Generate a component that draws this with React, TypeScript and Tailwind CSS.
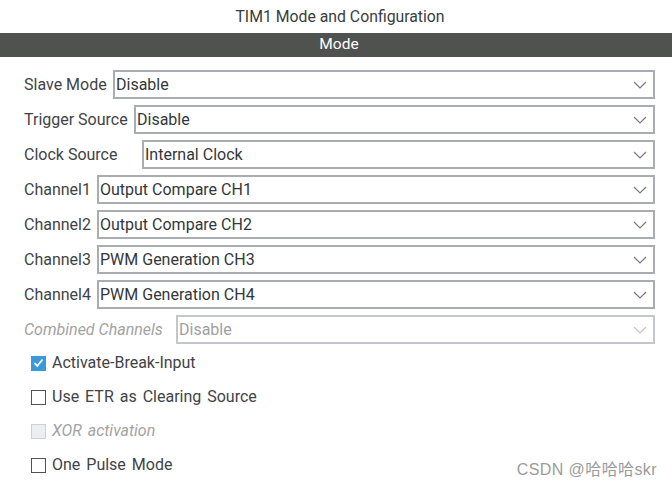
import React from 'react';

const Chevron = ({ disabled }: { disabled?: boolean }) => (
  <svg width="14" height="8" viewBox="0 0 14 8" className="shrink-0">
    <path d="M1 1 L7 7 L13 1" fill="none" stroke={disabled ? '#c4c4c4' : '#7a7a7a'} strokeWidth="1.2" />
  </svg>
);

const SelectRow = ({
  label,
  value,
  labelWidth,
  disabled,
}: {
  label: string;
  value: string;
  labelWidth: string;
  disabled?: boolean;
}) => (
  <div className="flex items-center h-[29px]">
    <div
      className={`${labelWidth} shrink-0 whitespace-nowrap ${disabled ? 'italic text-[#a3a3a3]' : 'text-[#3f4347]'}`}
    >
      {label}
    </div>
    <div
      className={`flex-1 h-full flex items-center justify-between pl-[1px] pr-[6px] border-2 ${
        disabled ? 'border-[#c3c6ca] text-[#a0a0a0]' : 'border-[#a9adb2] text-[#33373b]'
      }`}
    >
      <span>{value}</span>
      <Chevron disabled={disabled} />
    </div>
  </div>
);

const Check = ({ label, checked, disabled }: { label: string; checked?: boolean; disabled?: boolean }) => (
  <div className="flex items-center h-[34px] gap-[6px]">
    {checked ? (
      <div className="w-[15px] h-[15px] bg-[#3a9ad9] flex items-center justify-center">
        <svg width="11" height="10" viewBox="0 0 11 10">
          <path d="M1.5 5.2 L4.3 8 L9.5 1.5" fill="none" stroke="#ffffff" strokeWidth="1.8" />
        </svg>
      </div>
    ) : (
      <div
        className={`w-[15px] h-[15px] border-[1.5px] ${
          disabled ? 'border-[#cdd0d4] bg-[#eceef1]' : 'border-[#505356] bg-white'
        }`}
      />
    )}
    <span className={`[word-spacing:2px] ${disabled ? 'italic text-[#a3a3a3]' : 'text-[#3f4347]'}`}>{label}</span>
  </div>
);

export default function App() {
  return (
    <div className="relative w-[672px] h-[491px] bg-white overflow-hidden font-['Roboto',sans-serif] text-[16px]">
      {/* Title */}
      <div className="h-[33px] pl-[8px] flex items-center justify-center text-[15.8px] text-[#3a3d40]">
        TIM1 Mode and Configuration
      </div>

      {/* Section bar */}
      <div className="h-[24px] pl-[6px] bg-[#505250] flex items-center justify-center text-[15.5px] text-white">
        Mode
      </div>

      {/* Form */}
      <div className="pl-[24px] pr-[17px] pt-[13px]">
        <div className="flex flex-col gap-[6px]">
          <SelectRow label="Slave Mode" value="Disable" labelWidth="w-[89px]" />
          <SelectRow label="Trigger Source" value="Disable" labelWidth="w-[110px]" />
          <SelectRow label="Clock Source" value="Internal Clock" labelWidth="w-[118px]" />
          <SelectRow label="Channel1" value="Output Compare CH1" labelWidth="w-[73px]" />
          <SelectRow label="Channel2" value="Output Compare CH2" labelWidth="w-[73px]" />
          <SelectRow label="Channel3" value="PWM Generation CH3" labelWidth="w-[73px]" />
          <SelectRow label="Channel4" value="PWM Generation CH4" labelWidth="w-[73px]" />
          <SelectRow label="Combined Channels" value="Disable" labelWidth="w-[152px]" disabled />
        </div>

        <div className="mt-[2px] pl-[7px]">
          <Check label="Activate-Break-Input" checked />
          <Check label="Use ETR as Clearing Source" />
          <Check label="XOR activation" disabled />
          <Check label="One Pulse Mode" />
        </div>
      </div>

      {/* Watermark */}
      <div className="absolute right-[15px] bottom-[9px] text-[16px] tracking-[0.4px] text-[#9b9b9b] font-['Liberation_Sans','Noto_Sans_CJK_SC',sans-serif]">
        CSDN @哈哈哈skr
      </div>
    </div>
  );
}
